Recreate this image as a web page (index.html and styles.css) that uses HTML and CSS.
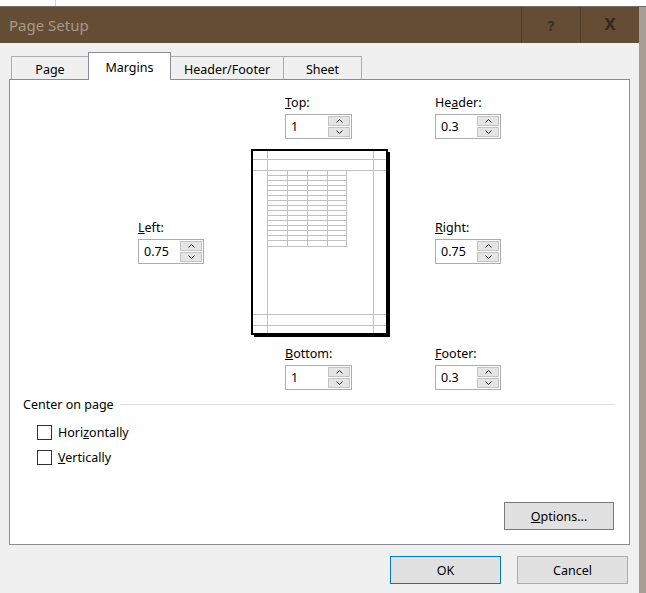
FILE: index.html
```html
<!DOCTYPE html>
<html>
<head>
<meta charset="utf-8">
<link rel="stylesheet" href="styles.css">
</head>
<body>
<div class="topstrip"><span class="tick"></span></div>
<div class="main">
  <div class="dialog">
    <div class="titlebar">
      <span class="title">Page Setup</span>
      <div class="tbtns">
        <span class="tbtn help">?</span>
        <span class="tbtn close">X</span>
      </div>
    </div>
    <div class="body">
      <div class="tabs">
        <div class="tab t-page">Page</div>
        <div class="tab t-margins active">Margins</div>
        <div class="tab t-hf">Header/Footer</div>
        <div class="tab t-sheet">Sheet</div>
      </div>
      <div class="panel">
        <div class="grid">
          <div class="field f-top">
            <div class="lbl"><u>T</u>op:</div>
            <div class="spin"><div class="val">1</div><div class="arrows"><div class="ab"><svg width="7" height="4" viewBox="0 0 7 4"><polyline points="0.5,3.5 3.5,0.5 6.5,3.5" fill="none" stroke="#222" stroke-width="1"/></svg></div><div class="ab"><svg width="7" height="4" viewBox="0 0 7 4"><polyline points="0.5,0.5 3.5,3.5 6.5,0.5" fill="none" stroke="#222" stroke-width="1"/></svg></div></div></div>
          </div>
          <div class="field f-header">
            <div class="lbl">He<u>a</u>der:</div>
            <div class="spin"><div class="val">0.3</div><div class="arrows"><div class="ab"><svg width="7" height="4" viewBox="0 0 7 4"><polyline points="0.5,3.5 3.5,0.5 6.5,3.5" fill="none" stroke="#222" stroke-width="1"/></svg></div><div class="ab"><svg width="7" height="4" viewBox="0 0 7 4"><polyline points="0.5,0.5 3.5,3.5 6.5,0.5" fill="none" stroke="#222" stroke-width="1"/></svg></div></div></div>
          </div>
          <div class="field f-left">
            <div class="lbl"><u>L</u>eft:</div>
            <div class="spin"><div class="val">0.75</div><div class="arrows"><div class="ab"><svg width="7" height="4" viewBox="0 0 7 4"><polyline points="0.5,3.5 3.5,0.5 6.5,3.5" fill="none" stroke="#222" stroke-width="1"/></svg></div><div class="ab"><svg width="7" height="4" viewBox="0 0 7 4"><polyline points="0.5,0.5 3.5,3.5 6.5,0.5" fill="none" stroke="#222" stroke-width="1"/></svg></div></div></div>
          </div>
          <div class="preview">
            <svg width="141" height="190" viewBox="0 0 141 190">
              <rect x="3" y="3" width="136" height="185" fill="#000"/>
              <rect x="1" y="1" width="135" height="184" fill="#fff" stroke="#000" stroke-width="2"/>
              <g stroke="#c0c0c0" stroke-width="1" fill="none">
                <line x1="16.5" y1="2" x2="16.5" y2="184"/>
                <line x1="122.5" y1="2" x2="122.5" y2="184"/>
                <line x1="2" y1="10.5" x2="135" y2="10.5"/>
                <line x1="2" y1="21.5" x2="135" y2="21.5"/>
                <line x1="2" y1="165.5" x2="135" y2="165.5"/>
                <line x1="2" y1="176.5" x2="135" y2="176.5"/>
                <line x1="36.5" y1="21" x2="36.5" y2="97"/>
                <line x1="56.5" y1="21" x2="56.5" y2="97"/>
                <line x1="76.5" y1="21" x2="76.5" y2="97"/>
                <line x1="95.5" y1="21" x2="95.5" y2="97"/>
                <line x1="16" y1="26.5" x2="96" y2="26.5"/>
                <line x1="16" y1="31.5" x2="96" y2="31.5"/>
                <line x1="16" y1="36.5" x2="96" y2="36.5"/>
                <line x1="16" y1="41.5" x2="96" y2="41.5"/>
                <line x1="16" y1="46.5" x2="96" y2="46.5"/>
                <line x1="16" y1="51.5" x2="96" y2="51.5"/>
                <line x1="16" y1="56.5" x2="96" y2="56.5"/>
                <line x1="16" y1="61.5" x2="96" y2="61.5"/>
                <line x1="16" y1="66.5" x2="96" y2="66.5"/>
                <line x1="16" y1="71.5" x2="96" y2="71.5"/>
                <line x1="16" y1="76.5" x2="96" y2="76.5"/>
                <line x1="16" y1="81.5" x2="96" y2="81.5"/>
                <line x1="16" y1="86.5" x2="96" y2="86.5"/>
                <line x1="16" y1="91.5" x2="96" y2="91.5"/>
                <line x1="16" y1="97.5" x2="96" y2="97.5"/>
              </g>
            </svg>
          </div>
          <div class="field f-right">
            <div class="lbl"><u>R</u>ight:</div>
            <div class="spin"><div class="val">0.75</div><div class="arrows"><div class="ab"><svg width="7" height="4" viewBox="0 0 7 4"><polyline points="0.5,3.5 3.5,0.5 6.5,3.5" fill="none" stroke="#222" stroke-width="1"/></svg></div><div class="ab"><svg width="7" height="4" viewBox="0 0 7 4"><polyline points="0.5,0.5 3.5,3.5 6.5,0.5" fill="none" stroke="#222" stroke-width="1"/></svg></div></div></div>
          </div>
          <div class="field f-bottom">
            <div class="lbl"><u>B</u>ottom:</div>
            <div class="spin"><div class="val">1</div><div class="arrows"><div class="ab"><svg width="7" height="4" viewBox="0 0 7 4"><polyline points="0.5,3.5 3.5,0.5 6.5,3.5" fill="none" stroke="#222" stroke-width="1"/></svg></div><div class="ab"><svg width="7" height="4" viewBox="0 0 7 4"><polyline points="0.5,0.5 3.5,3.5 6.5,0.5" fill="none" stroke="#222" stroke-width="1"/></svg></div></div></div>
          </div>
          <div class="field f-footer">
            <div class="lbl"><u>F</u>ooter:</div>
            <div class="spin"><div class="val">0.3</div><div class="arrows"><div class="ab"><svg width="7" height="4" viewBox="0 0 7 4"><polyline points="0.5,3.5 3.5,0.5 6.5,3.5" fill="none" stroke="#222" stroke-width="1"/></svg></div><div class="ab"><svg width="7" height="4" viewBox="0 0 7 4"><polyline points="0.5,0.5 3.5,3.5 6.5,0.5" fill="none" stroke="#222" stroke-width="1"/></svg></div></div></div>
          </div>
        </div>
        <div class="group">
          <div class="legend"><span>Center on page</span><span class="rule"></span></div>
          <div class="check c1"><span class="box"></span><span>Hori<u>z</u>ontally</span></div>
          <div class="check c2"><span class="box"></span><span><u>V</u>ertically</span></div>
        </div>
        <div class="optrow"><button class="btn opt"><u>O</u>ptions...</button></div>
      </div>
      <div class="footer">
        <button class="btn ok">OK</button>
        <button class="btn">Cancel</button>
      </div>
    </div>
  </div>
  <div class="edge"></div>
</div>
</body>
</html>
```
FILE: styles.css
```css
* { box-sizing: border-box; }
html, body { margin: 0; padding: 0; }
body {
  width: 646px;
  height: 593px;
  overflow: hidden;
  background: #f0f0f0;
  font-family: "Noto Sans", "Open Sans", sans-serif;
  font-size: 12px;
  color: #000;
}
.topstrip {
  height: 7px;
  background: #fff;
  border-bottom: 1px solid #6e6e6e;
}
.tick {
  display: block;
  margin-left: 55px;
  width: 1px;
  height: 6px;
  background: #d4d4d4;
}
.main {
  display: flex;
  height: 586px;
}
.dialog {
  width: 639px;
  background: #f0f0f0;
  display: flex;
  flex-direction: column;
}
.edge {
  flex: 1;
  background: #a99e95;
}
.titlebar {
  height: 36px;
  background: #654d35;
  display: flex;
  align-items: center;
}
.title {
  padding-left: 9px;
  color: #a6988a;
  font-size: 15px;
}
.tbtns {
  margin-left: auto;
  display: flex;
  height: 100%;
}
.tbtn {
  width: 59px;
  height: 100%;
  display: flex;
  align-items: center;
  justify-content: center;
  border-left: 1px solid #4f3d2b;
}
.help {
  color: #3e2f21;
  font-size: 15px;
  font-weight: bold;
}
.close {
  color: #3a2a1b;
  font-size: 15px;
  font-weight: bold;
  font-family: "DejaVu Sans", sans-serif;
}
.body {
  padding: 10px 9px 0 9px;
  display: flex;
  flex-direction: column;
}
.tabs {
  display: flex;
  align-items: flex-end;
  height: 27px;
  padding-left: 2px;
  margin-bottom: -1px;
}
.tab {
  height: 24px;
  border: 1px solid #adadad;
  border-bottom: none;
  background: #f0f0f0;
  display: flex;
  align-items: center;
  justify-content: center;
  padding-top: 2px;
  font-size: 12.5px;
}
.t-page { width: 78px; }
.t-margins { width: 83px; margin-left: -1px; }
.t-hf { width: 114px; margin-left: -1px; }
.t-sheet { width: 79px; margin-left: -1px; }
.tab.active {
  height: 28px;
  background: #fff;
  border-color: #8c8c94;
  padding-top: 2px;
  padding-bottom: 0;
  z-index: 1;
}
.panel {
  height: 466px;
  background: #fff;
  border: 1px solid #8c8c94;
  display: flex;
  flex-direction: column;
  padding: 15px 14px 14px 13px;
}
.grid {
  display: grid;
  grid-template-columns: 113px 139px 45px 66px;
  align-items: start;
  margin-left: 115px;
}
.field {
  display: flex;
  flex-direction: column;
}
.lbl {
  height: 16px;
  line-height: 16px;
  margin-bottom: 3px;
  font-size: 12.5px;
}
.spin {
  height: 25px;
  width: 67px;
  display: flex;
  border: 1px solid #adadad;
  background: #fff;
}
.val {
  flex: 1;
  padding-left: 5px;
  line-height: 23px;
  font-size: 12.5px;
}
.arrows {
  width: 23px;
  display: flex;
  flex-direction: column;
  gap: 1px;
  padding: 1px 1px 1px 0;
}
.ab {
  flex: 1;
  background: #e5e5e5;
  border: 1px solid #c4c4c4;
  display: flex;
  align-items: center;
  justify-content: center;
}
.f-top { grid-column: 2; grid-row: 1; margin-left: 34px; }
.f-header { grid-column: 4; grid-row: 1; }
.f-left { grid-column: 1; grid-row: 2; margin-top: 81px; }
.f-left .spin { width: 66px; }
.preview { grid-column: 2; grid-row: 2; margin-top: 10px; height: 190px; }
.preview svg { display: block; }
.f-right { grid-column: 4; grid-row: 2; margin-top: 81px; }
.f-right .spin, .f-header .spin, .f-footer .spin { width: 66px; }
.f-bottom { grid-column: 2; grid-row: 3; margin-left: 34px; margin-top: 7px; }
.f-footer { grid-column: 4; grid-row: 3; margin-top: 7px; }
.group {
  margin-top: 6px;
}
.legend {
  display: flex;
  align-items: center;
  height: 16px;
  font-size: 12.5px;
}
.rule {
  flex: 1;
  height: 1px;
  background: #dcdcdc;
  margin-left: 6px;
}
.check {
  display: flex;
  align-items: center;
  height: 16px;
  margin-left: 14px;
  font-size: 12.5px;
}
.c1 { margin-top: 12px; }
.c2 { margin-top: 9px; }
.box {
  width: 15px;
  height: 15px;
  border: 1px solid #333;
  background: #fff;
  margin-right: 6px;
}
.optrow {
  margin-top: auto;
  display: flex;
  justify-content: flex-end;
  padding-right: 1px;
}
.btn {
  width: 111px;
  height: 28px;
  background: #e1e1e1;
  border: 1px solid #adadad;
  font-family: "Noto Sans", "Open Sans", sans-serif;
  font-size: 12.5px;
  color: #000;
  padding: 0;
}
.opt { width: 110px; border-color: #7a7a7a; }
.footer {
  display: flex;
  justify-content: flex-end;
  gap: 16px;
  margin-top: 11px;
  padding-right: 2px;
}
.ok { border-color: #0078d7; }
```
